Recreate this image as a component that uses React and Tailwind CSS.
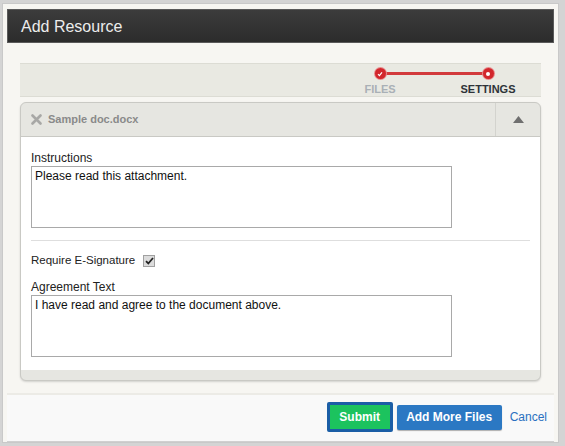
import React from "react";

const font = { fontFamily: '"Liberation Sans", Arial, sans-serif' };

function Dot({ done }) {
  return (
    <div className="relative z-10 flex h-[11px] w-[11px] items-center justify-center rounded-full bg-[#d2262c] ring-1 ring-[#e78a8c]">
      {done ? (
        <svg width="6" height="6" viewBox="0 0 6 6">
          <path d="M1 3.2 L2.4 4.6 L5 1.4" stroke="#fff" strokeWidth="1.2" fill="none" />
        </svg>
      ) : (
        <div className="h-[4px] w-[4px] rounded-full bg-white" />
      )}
    </div>
  );
}

export default function App() {
  return (
    <div className="h-[446px] w-[565px] overflow-hidden bg-[#d4d4d4] pt-[3px] pl-[2px]" style={font}>
      <div className="flex h-[440px] w-[557px] flex-col border border-[#c9c9c9] bg-[#f7f6f2] px-[4px] pt-[5px]">
        {/* Header */}
        <div className="flex h-[34px] items-center border border-[#5a5a5a] bg-gradient-to-b from-[#3c3c3c] to-[#2c2c2c] pl-[13px] pt-[1px] text-[16px] text-[#ececec]">
          Add Resource
        </div>

        {/* Body */}
        <div className="px-[13px] pt-[20px]">
          {/* Steps */}
          <div className="flex h-[34px] justify-end border-t border-b border-[#dcdcd4] bg-[#e9e9e2] pr-[23px]">
            <div className="relative flex gap-[48px] pt-[4px]">
              <div className="absolute left-[30px] top-[8px] h-[3px] w-[108px] bg-[#d23a3c]" />
              <div className="flex w-[60px] flex-col items-center gap-[4px]">
                <Dot done />
                <div className="text-[11px] font-bold leading-[12px] text-[#a9b0b6]">FILES</div>
              </div>
              <div className="flex w-[60px] flex-col items-center gap-[4px]">
                <Dot />
                <div className="text-[11px] font-bold leading-[12px] text-[#2e3338]">SETTINGS</div>
              </div>
            </div>
          </div>

          {/* Card */}
          <div className="mt-[5px] h-[279px] rounded-[6px] border border-[#c9c9c4] bg-[#e6e6e1] pb-[10px] shadow-[0_1px_2px_rgba(0,0,0,0.15)]">
            <div className="flex h-[34px] items-stretch border-b border-[#c9c9c4]">
              <div className="flex flex-1 items-center gap-[6px] pl-[10px]">
                <svg width="11" height="11" viewBox="0 0 11 11">
                  <path d="M1.5 1.5 L9.5 9.5 M9.5 1.5 L1.5 9.5" stroke="#a8a8a6" strokeWidth="2.6" strokeLinecap="round" />
                </svg>
                <span className="text-[11px] font-bold text-[#8a8a8a]">Sample doc.docx</span>
              </div>
              <div className="flex w-[45px] items-center justify-center border-l border-[#d3d3ce]">
                <svg width="11" height="7" viewBox="0 0 11 7">
                  <path d="M0 7 L5.5 0 L11 7 Z" fill="#6f6f6f" />
                </svg>
              </div>
            </div>
            <div className="h-[233px] bg-white px-[10px] pt-[14px] text-[12px] text-[#222]">
              <div className="leading-[15px]">Instructions</div>
              <div className="h-[62px] w-[421px] border border-[#a9a9a9] px-[3px] pt-[2px] text-[12px] leading-[15px] text-[#111]">
                Please read this attachment.
              </div>
              <div className="mt-[12px] border-t border-[#dedede]" />
              <div className="mt-[12px] flex items-center gap-[8px] leading-[15px]">
                <span className="text-[11.5px]">Require E-Signature</span>
                <span className="flex h-[12px] w-[12px] items-center justify-center border border-[#a0a0a0] bg-[#dcdcdc]">
                  <svg width="9" height="8" viewBox="0 0 9 8">
                    <path d="M1 4.2 L3.3 6.5 L8 1" stroke="#222" strokeWidth="1.8" fill="none" />
                  </svg>
                </span>
              </div>
              <div className="mt-[12px] leading-[15px]">Agreement Text</div>
              <div className="h-[62px] w-[421px] border border-[#a9a9a9] px-[3px] pt-[2px] text-[12px] leading-[15px] text-[#111]">
                I have read and agree to the document above.
              </div>
            </div>
          </div>
        </div>

        {/* Footer */}
        <div className="mt-[12px] flex h-[49px] items-center justify-end gap-[4px] border-t-2 border-b border-t-[#ecebe6] border-b-[#d0d0d0] bg-[#f9f9f9] pr-[7px] pb-[2px]">
          <div className="rounded-[2px] border-[3px] border-[#1b5ea6]">
            <div className="flex h-[24px] w-[60px] items-center justify-center bg-[#1cc35e] text-[12px] font-bold text-white">
              Submit
            </div>
          </div>
          <div className="flex h-[25px] w-[105px] items-center justify-center rounded-[2px] bg-[#2b78c3] text-[12px] font-bold text-white shadow-[0_1px_1px_rgba(0,0,0,0.3)]">
            Add More Files
          </div>
          <span className="ml-[4px] text-[12px] text-[#2a70c0]">Cancel</span>
        </div>
      </div>
    </div>
  );
}
